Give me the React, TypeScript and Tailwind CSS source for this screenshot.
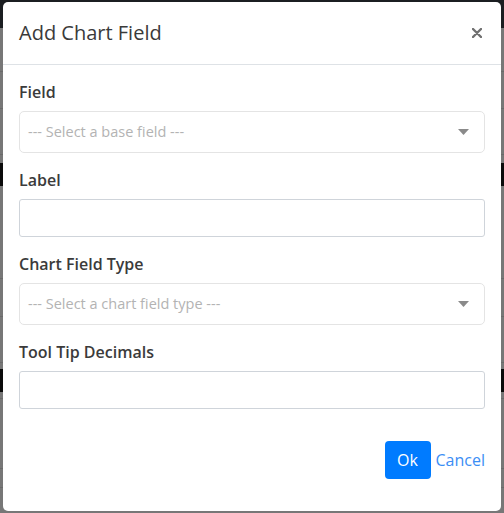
import React from "react";

function Caret() {
  return (
    <svg width="11" height="6" viewBox="0 0 11 6" className="shrink-0">
      <path d="M0 0 L11 0 L5.5 6 Z" fill="#8a8a8a" />
    </svg>
  );
}

function SelectBox({ placeholder }: { placeholder: string }) {
  return (
    <div className="flex h-[42px] items-center justify-between rounded-[5px] border border-[#e4e4e4] bg-white pl-[8px] pr-[15px]">
      <span className="text-[14.5px] text-[#b3b3b3]">{placeholder}</span>
      <Caret />
    </div>
  );
}

function TextBox() {
  return <div className="h-[38px] rounded-[3px] border border-[#cfd4da] bg-white" />;
}

function Group({ label, children }: { label: string; children: React.ReactNode }) {
  return (
    <div className="mb-4 flex flex-col">
      <div className="mb-2 text-[16px] font-semibold leading-[22px] text-[#3b3b3b]">{label}</div>
      {children}
    </div>
  );
}

export default function App() {
  return (
    <div
      className="relative h-[513px] w-[504px] overflow-hidden bg-[#777777]"
      style={{ fontFamily: "'Open Sans', Lato, sans-serif" }}
    >
      {/* dimmed page behind the dialog */}
      <div className="flex flex-col">
        <div className="h-[28px] bg-[#1b1e21]" />
        <div className="h-[44px] border-b border-[#6a6a6a]" />
        <div className="h-[37px] border-b border-[#6a6a6a]" />
        <div className="h-[46px] border-b border-[#6a6a6a]" />
        <div className="h-[8px]" />
        <div className="h-[23px] bg-[#0a0a0a]" />
        <div className="h-[93px] border-b border-[#6a6a6a]" />
        <div className="h-[38px] border-b border-[#6a6a6a]" />
        <div className="h-[46px] border-b border-[#6a6a6a]" />
        <div className="h-[6px]" />
        <div className="h-[23px] bg-[#0a0a0a]" />
        <div className="h-[7px] border-b border-[#6a6a6a]" />
        <div className="h-[70px] border-b border-[#6a6a6a]" />
        <div className="h-[19px] border-b border-[#6a6a6a]" />
      </div>

      {/* dialog */}
      <div className="absolute left-[3px] top-[2px] flex h-[509px] w-[498px] flex-col rounded-[5px] bg-white">
        <div className="flex h-[63px] items-center justify-between border-b border-[#dee2e6] px-4">
          <div className="text-[20px] font-normal leading-[30px] text-[#3a3a3a]">Add Chart Field</div>
          <svg width="10" height="10" viewBox="0 0 10 10" className="mr-[3px]">
            <path d="M1 1 L9 9 M9 1 L1 9" stroke="#707070" strokeWidth="2.4" strokeLinecap="round" />
          </svg>
        </div>
        <div className="flex flex-col px-4 pt-4">
          <Group label="Field">
            <SelectBox placeholder="--- Select a base field ---" />
          </Group>
          <Group label="Label">
            <TextBox />
          </Group>
          <Group label="Chart Field Type">
            <SelectBox placeholder="--- Select a chart field type ---" />
          </Group>
          <Group label="Tool Tip Decimals">
            <TextBox />
          </Group>
          <div className="flex items-center justify-end pt-4">
            <button className="h-[38px] w-[46px] rounded-[4px] bg-[#007bff] text-[16px] text-white">Ok</button>
            <span className="ml-[5px] text-[16px] text-[#3b8ef5]">Cancel</span>
          </div>
        </div>
      </div>
    </div>
  );
}
